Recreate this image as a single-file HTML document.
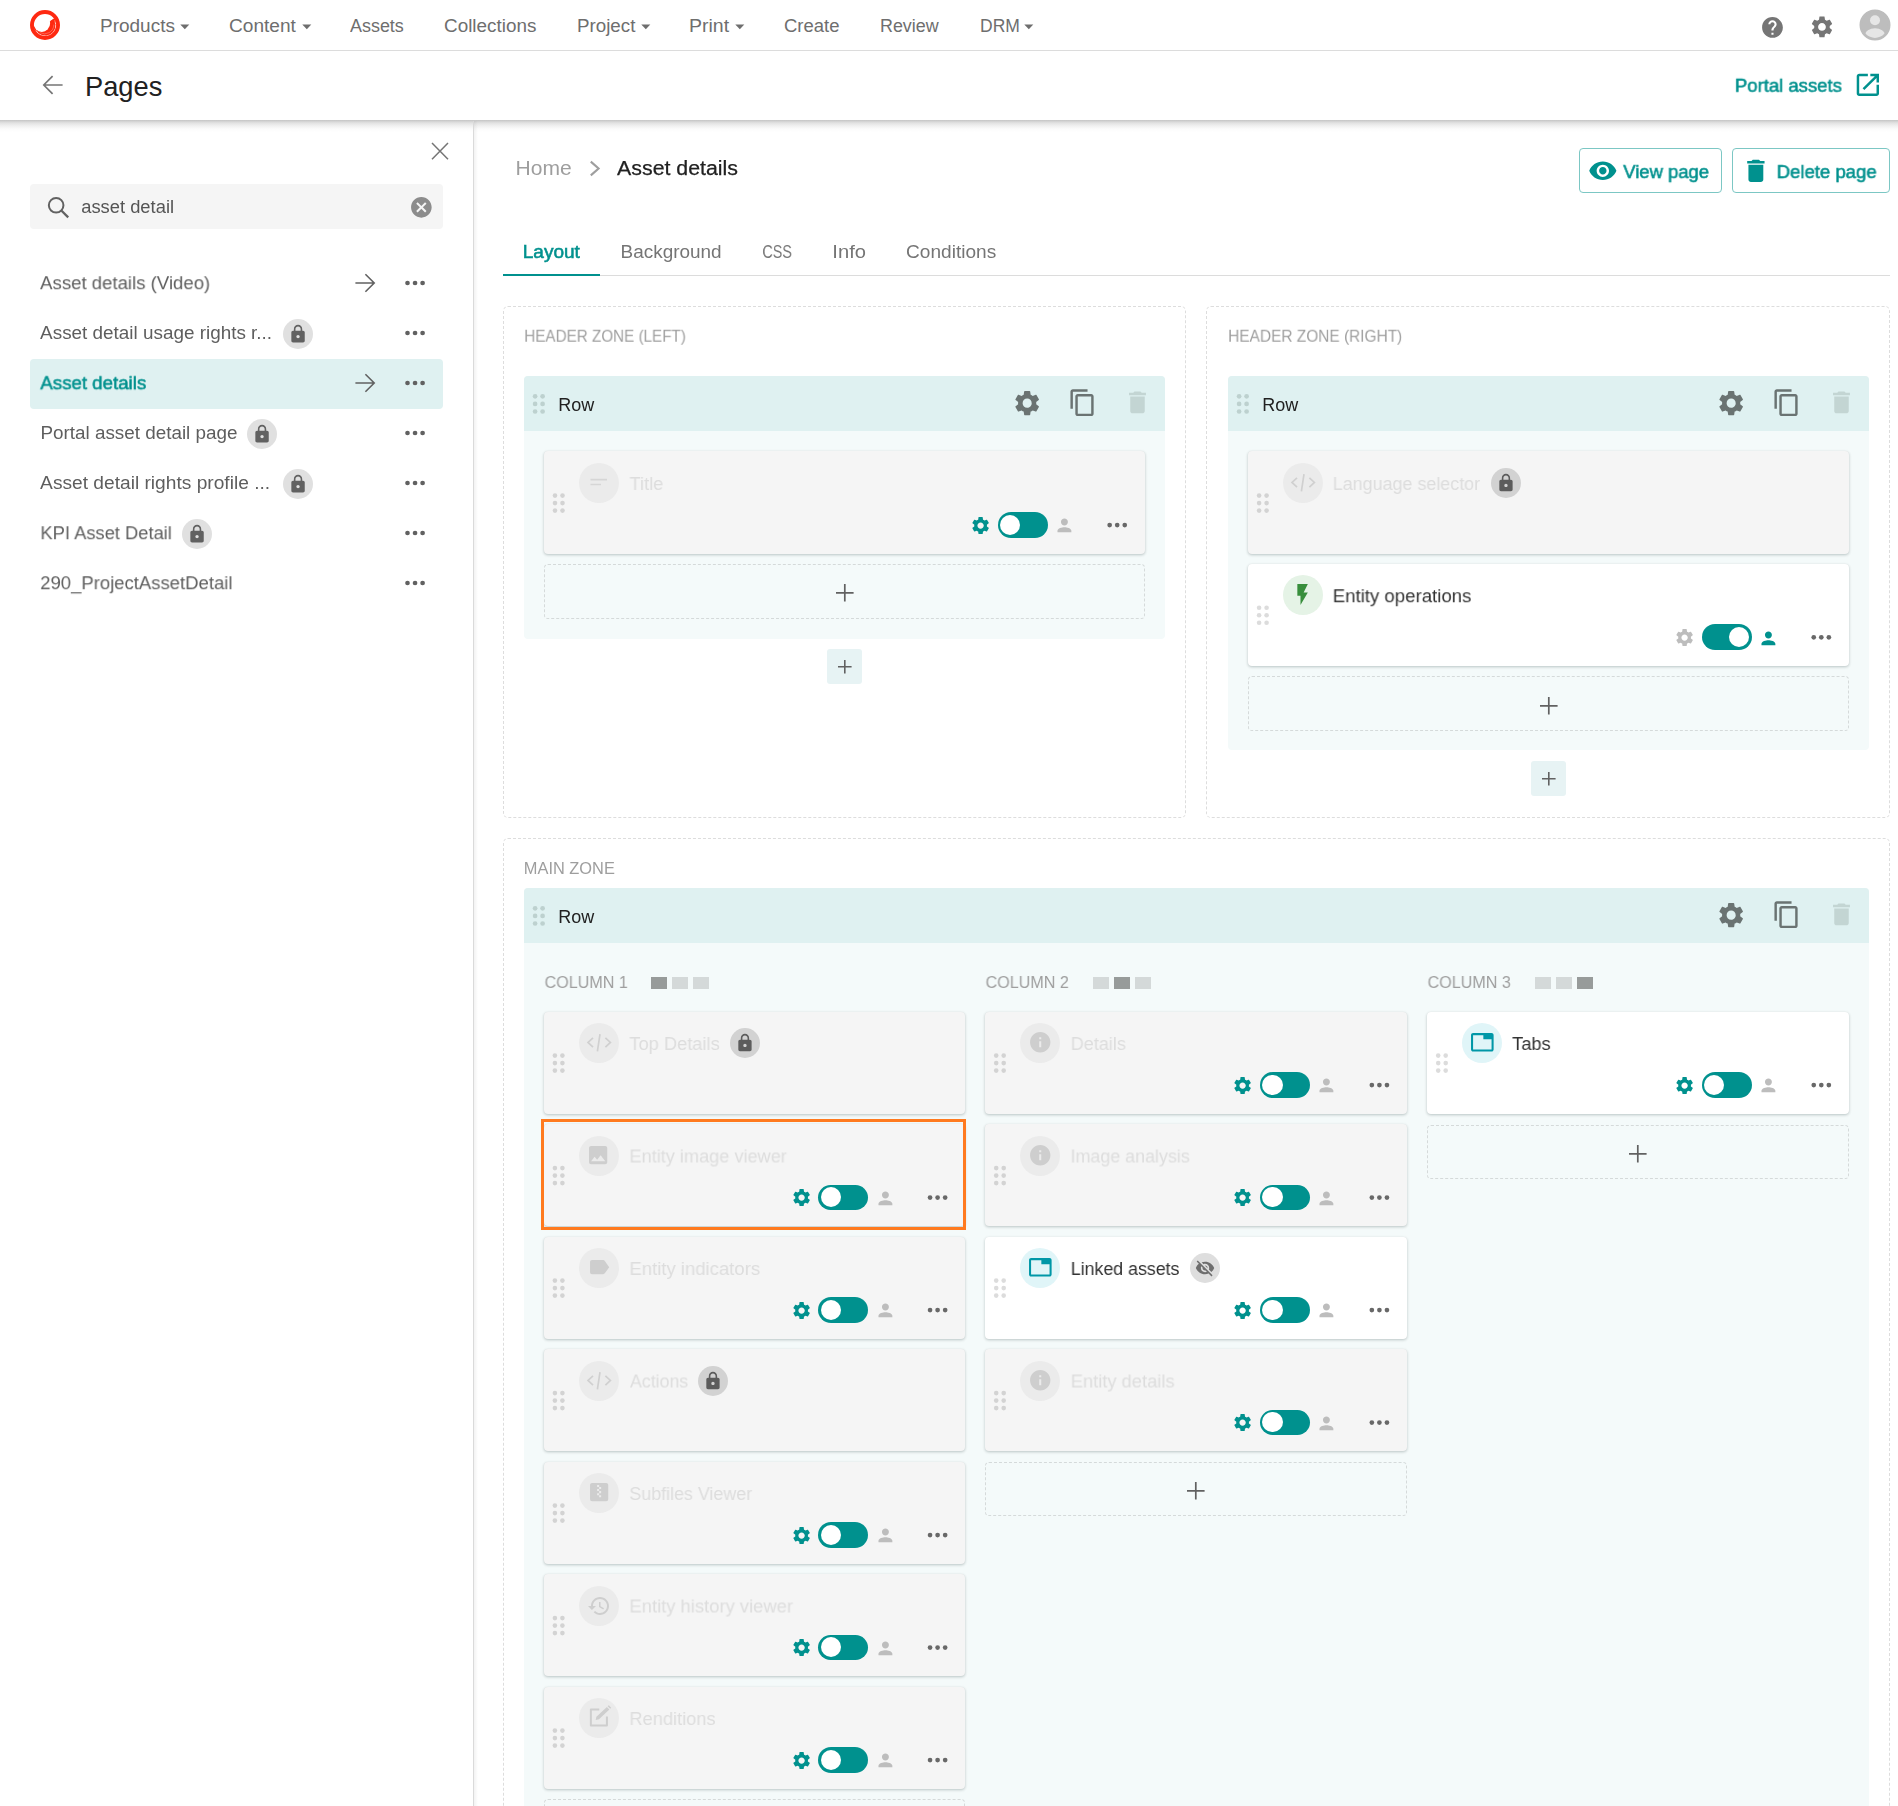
<!DOCTYPE html>
<html lang="en"><head><meta charset="utf-8"><title>Pages - Asset details</title>
<style>
html{margin:0;padding:0;background:#fff;overflow:hidden;width:1898px;height:1806px}
body{margin:0;padding:0;background:#fff}
body{width:1898px;height:1806px;position:relative;overflow:hidden;font-family:"Liberation Sans", sans-serif}
#r{position:absolute;left:0;top:0;width:1898px;height:1806px;overflow:hidden}
#r>div,#r>svg,#r>span{position:absolute;box-sizing:border-box}
.t{white-space:nowrap;line-height:24px;transform-origin:0 0;display:block}
.g{will-change:transform}
svg{display:block;overflow:visible}
.card{border-radius:4px;box-shadow:0 1px 3px rgba(0,30,30,.24),0 0 1px rgba(0,0,0,.06)}
.add{border:1px dashed #d5dada;border-radius:4px}
.zone{border:1px dashed #dddddd;border-radius:5px}
</style></head>
<body>
<div id="r">
<div style="left:0px;top:50px;width:1898px;height:1px;background:#dcdcdc"></div>
<svg style="left:29px;top:9px" width="32" height="32" viewBox="29 9 32 32">
<defs><clipPath id="lc"><circle cx="45" cy="25" r="11.6"/></clipPath></defs>
<g clip-path="url(#lc)">
<circle cx="45" cy="25" r="11.6" fill="#fe2911"/>
<ellipse cx="41.8" cy="22.9" rx="8.35" ry="9.1" fill="#fff"/>
<path d="M45 25 L58 15.6 L46 6 L30 10 Z" fill="#fff"/>
<path d="M35.8 30.3 A 10.6 10.6 0 0 0 54.7 20.6" stroke="#fff" stroke-opacity=".9" stroke-width=".9" fill="none"/>
<path d="M40 32.6 A 9.2 9.2 0 0 0 53.8 24.6" stroke="#fff" stroke-opacity=".45" stroke-width=".6" fill="none"/>
</g>
<path d="M50 21.3 L53.5 19 L55 22.6 Z" fill="#fe2911"/>
<circle cx="45" cy="25" r="13.05" stroke="#fe2911" stroke-width="3.9" fill="none"/>
</svg>
<span class="t" style="left:99.97px;top:14px;font-size:17.5px;color:#6e6e6e;transform:scaleX(1.0851)">Products</span>
<svg style="left:180.1px;top:24px" width="10" height="6" viewBox="0 0 10 6"><path d="M0.3 0.4H9.3L4.8 5.2Z" fill="#6e6e6e"/></svg>
<span class="t" style="left:228.81px;top:14px;font-size:17.5px;color:#6e6e6e;transform:scaleX(1.0905)">Content</span>
<svg style="left:301.5px;top:24px" width="10" height="6" viewBox="0 0 10 6"><path d="M0.3 0.4H9.3L4.8 5.2Z" fill="#6e6e6e"/></svg>
<span class="t" style="left:349.50px;top:14px;font-size:17.5px;color:#6e6e6e;transform:scaleX(1.0242)">Assets</span>
<span class="t" style="left:443.82px;top:14px;font-size:17.5px;color:#6e6e6e;transform:scaleX(1.0786)">Collections</span>
<span class="t" style="left:576.89px;top:14px;font-size:17.5px;color:#6e6e6e;transform:scaleX(1.0711)">Project</span>
<svg style="left:641.4px;top:24px" width="10" height="6" viewBox="0 0 10 6"><path d="M0.3 0.4H9.3L4.8 5.2Z" fill="#6e6e6e"/></svg>
<span class="t" style="left:689.48px;top:14px;font-size:17.5px;color:#6e6e6e;transform:scaleX(1.1139)">Print</span>
<svg style="left:735.2px;top:24px" width="10" height="6" viewBox="0 0 10 6"><path d="M0.3 0.4H9.3L4.8 5.2Z" fill="#6e6e6e"/></svg>
<span class="t" style="left:783.64px;top:14px;font-size:17.5px;color:#6e6e6e;transform:scaleX(1.0562)">Create</span>
<span class="t" style="left:880.22px;top:14px;font-size:17.5px;color:#6e6e6e;transform:scaleX(1.0223)">Review</span>
<span class="t" style="left:980.10px;top:14px;font-size:17.5px;color:#6e6e6e;transform:scaleX(1.0000)">DRM</span>
<svg style="left:1024.2px;top:24px" width="10" height="6" viewBox="0 0 10 6"><path d="M0.3 0.4H9.3L4.8 5.2Z" fill="#6e6e6e"/></svg>
<svg style="left:1760.12px;top:14.72px" width="24.96" height="24.96" viewBox="0 0 24 24"><path fill="#757575" d="M12 2C6.48 2 2 6.48 2 12s4.48 10 10 10 10-4.48 10-10S17.52 2 12 2zm1 17h-2v-2h2v2zm2.07-7.75l-.9.92C13.45 12.9 13 13.5 13 15h-2v-.5c0-1.1.45-2.1 1.17-2.83l1.24-1.26c.37-.36.59-.86.59-1.41 0-1.1-.9-2-2-2s-2 .9-2 2H8c0-2.21 1.79-4 4-4s4 1.79 4 4c0 .88-.36 1.68-.93 2.25z"/></svg>
<svg style="left:1809.42px;top:14.32px" width="25.96" height="25.96" viewBox="0 0 24 24"><path fill="#757575" d="M19.14 12.94c.04-.3.06-.61.06-.94 0-.32-.02-.64-.07-.94l2.03-1.58c.18-.14.23-.41.12-.61l-1.92-3.32c-.12-.22-.37-.29-.59-.22l-2.39.96c-.5-.38-1.03-.7-1.62-.94l-.36-2.54c-.04-.24-.24-.41-.48-.41h-3.84c-.24 0-.43.17-.47.41l-.36 2.54c-.59.24-1.13.57-1.62.94l-2.39-.96c-.22-.08-.47 0-.59.22L2.74 8.87c-.12.21-.08.47.12.61l2.03 1.58c-.05.3-.09.63-.09.94s.02.64.07.94l-2.03 1.58c-.18.14-.23.41-.12.61l1.92 3.32c.12.22.37.29.59.22l2.39-.96c.5.38 1.03.7 1.62.94l.36 2.54c.05.24.24.41.48.41h3.84c.24 0 .44-.17.47-.41l.36-2.54c.59-.24 1.13-.56 1.62-.94l2.39.96c.22.08.47 0 .59-.22l1.92-3.32c.12-.22.07-.47-.12-.61l-2.01-1.58zM12 15.6c-1.98 0-3.6-1.62-3.6-3.6s1.62-3.6 3.6-3.6 3.6 1.62 3.6 3.6-1.62 3.6-3.6 3.6z"/></svg>
<svg style="left:1860px;top:10px" width="30" height="30" viewBox="0 0 30 30">
<defs><clipPath id="av"><circle cx="15" cy="15" r="15"/></clipPath></defs>
<circle cx="15" cy="15" r="15" fill="#bdbdbd"/>
<g clip-path="url(#av)" fill="#e6e6e6"><circle cx="15" cy="10.3" r="5"/><ellipse cx="15" cy="24.6" rx="10" ry="6.3"/></g>
<circle cx="15" cy="15" r="14.2" fill="none" stroke="#bdbdbd" stroke-width="2.6"/>
</svg>
<div style="left:0px;top:120px;width:1898px;height:12px;background:linear-gradient(#c4c4c4 0,#cfcfcf 8%,#e2e2e2 25%,#f1f1f1 50%,#fbfbfb 75%,#fff 100%)"></div>
<svg style="left:42px;top:74px" width="22" height="22" viewBox="0 0 22 22"><path d="M20.6 11H2M10.6 2.2L1.8 11l8.8 8.8" stroke="#757575" stroke-width="1.7" fill="none"/></svg>
<span class="t" style="left:85.41px;top:75px;font-size:28px;color:#212121;transform:scaleX(0.9737)">Pages</span>
<span class="t g" style="left:1734px;top:73px;font-size:18.75px;color:#00918e;transform:translate(0.87px,0.80px) scaleX(0.9874);-webkit-text-stroke:0.55px #00918e">Portal assets</span>
<svg style="left:1852.63px;top:70.03px" width="29.73" height="29.73" viewBox="0 0 24 24"><path fill="#00918e" d="M19 19H5V5h7V3H5c-1.11 0-2 .9-2 2v14c0 1.1.89 2 2 2h14c1.1 0 2-.9 2-2v-7h-2v7zM14 3v2h3.59l-9.83 9.83 1.41 1.41L19 6.41V10h2V3h-7z"/></svg>
<div style="left:473px;top:121px;width:1px;height:1690px;background:#dadada"></div>
<div style="left:474px;top:121px;width:4px;height:1690px;background:linear-gradient(90deg,rgba(0,0,0,.05),rgba(0,0,0,0))"></div>
<svg style="left:431px;top:141.5px" width="18" height="18" viewBox="0 0 18 18"><path d="M1 1L17 17.3M17 1L1 17.3" stroke="#757575" stroke-width="1.5" fill="none"/></svg>
<div style="left:30px;top:184px;width:413px;height:44.5px;background:#f5f5f5;border-radius:4px"></div>
<svg style="left:46px;top:196px" width="24" height="24" viewBox="0 0 24 24"><circle cx="10.15" cy="9.3" r="7.3" stroke="#616161" stroke-width="2" fill="none"/><path d="M15.6 14.8L22.2 21.4" stroke="#616161" stroke-width="2.3"/></svg>
<span class="t g" style="left:81px;top:195px;font-size:17.5px;color:#555;transform:translate(0.21px,0.00px) scaleX(1.0486)">asset detail</span>
<svg style="left:408.94px;top:195.24px" width="24.72" height="24.72" viewBox="0 0 24 24"><path fill="#8c8c8c" d="M12 2C6.47 2 2 6.47 2 12s4.47 10 10 10 10-4.47 10-10S17.53 2 12 2zm5 13.59L15.59 17 12 13.41 8.41 17 7 15.59 10.59 12 7 8.41 8.41 7 12 10.59 15.59 7 17 8.41 13.41 12 17 15.59z"/></svg>
<div style="left:30px;top:358.8px;width:413px;height:50px;background:#dff1f1;border-radius:4px"></div>
<span class="t g" style="left:40px;top:271px;font-size:18.75px;color:#5e5e5e;transform:translate(0.10px,0.20px) scaleX(0.9912)">Asset details (Video)</span>
<svg style="left:354px;top:272px" width="22" height="22" viewBox="0 0 22 22"><path d="M1.4 11H20M11.4 2.2l8.8 8.8-8.8 8.8" stroke="#616161" stroke-width="1.6" fill="none"/></svg>
<svg style="left:402px;top:278px" width="26" height="10" fill="#616161"><circle cx="5.50" cy="5.00" r="2.35"/><circle cx="13.05" cy="5.00" r="2.35"/><circle cx="20.60" cy="5.00" r="2.35"/></svg>
<span class="t g" style="left:40px;top:321px;font-size:18.75px;color:#5e5e5e;transform:translate(0.10px,0.20px) scaleX(1.0072)">Asset detail usage rights r...</span>
<svg style="left:402px;top:328px" width="26" height="10" fill="#616161"><circle cx="5.50" cy="5.00" r="2.35"/><circle cx="13.05" cy="5.00" r="2.35"/><circle cx="20.60" cy="5.00" r="2.35"/></svg>
<div style="left:282.8px;top:318.7px;width:30px;height:30px;background:#e0e0e0;border-radius:50%"></div>
<svg style="left:287.75px;top:323.57px" width="20.10" height="20.10" viewBox="0 0 24 24"><path fill="#616161" d="M18 8h-1V6c0-2.76-2.24-5-5-5S7 3.24 7 6v2H6c-1.1 0-2 .9-2 2v10c0 1.1.9 2 2 2h12c1.1 0 2-.9 2-2V10c0-1.1-.9-2-2-2zm-6 9c-1.1 0-2-.9-2-2s.9-2 2-2 2 .9 2 2-.9 2-2 2zm3.1-9H8.9V6c0-1.71 1.39-3.1 3.1-3.1 1.71 0 3.1 1.39 3.1 3.1v2z"/></svg>
<span class="t g" style="left:40px;top:371px;font-size:18.75px;color:#00918e;transform:translate(0.35px,0.20px) scaleX(0.9958);-webkit-text-stroke:0.55px #00918e">Asset details</span>
<svg style="left:354px;top:372px" width="22" height="22" viewBox="0 0 22 22"><path d="M1.4 11H20M11.4 2.2l8.8 8.8-8.8 8.8" stroke="#616161" stroke-width="1.6" fill="none"/></svg>
<svg style="left:402px;top:378px" width="26" height="10" fill="#616161"><circle cx="5.50" cy="5.00" r="2.35"/><circle cx="13.05" cy="5.00" r="2.35"/><circle cx="20.60" cy="5.00" r="2.35"/></svg>
<span class="t g" style="left:40px;top:421px;font-size:18.75px;color:#5e5e5e;transform:translate(0.39px,0.20px) scaleX(1.0059)">Portal asset detail page</span>
<svg style="left:402px;top:428px" width="26" height="10" fill="#616161"><circle cx="5.50" cy="5.00" r="2.35"/><circle cx="13.05" cy="5.00" r="2.35"/><circle cx="20.60" cy="5.00" r="2.35"/></svg>
<div style="left:247px;top:418.7px;width:30px;height:30px;background:#e0e0e0;border-radius:50%"></div>
<svg style="left:251.95px;top:423.57px" width="20.10" height="20.10" viewBox="0 0 24 24"><path fill="#616161" d="M18 8h-1V6c0-2.76-2.24-5-5-5S7 3.24 7 6v2H6c-1.1 0-2 .9-2 2v10c0 1.1.9 2 2 2h12c1.1 0 2-.9 2-2V10c0-1.1-.9-2-2-2zm-6 9c-1.1 0-2-.9-2-2s.9-2 2-2 2 .9 2 2-.9 2-2 2zm3.1-9H8.9V6c0-1.71 1.39-3.1 3.1-3.1 1.71 0 3.1 1.39 3.1 3.1v2z"/></svg>
<span class="t g" style="left:40px;top:471px;font-size:18.75px;color:#5e5e5e;transform:translate(0.10px,0.20px) scaleX(1.0219)">Asset detail rights profile ...</span>
<svg style="left:402px;top:478px" width="26" height="10" fill="#616161"><circle cx="5.50" cy="5.00" r="2.35"/><circle cx="13.05" cy="5.00" r="2.35"/><circle cx="20.60" cy="5.00" r="2.35"/></svg>
<div style="left:282.85px;top:468.7px;width:30px;height:30px;background:#e0e0e0;border-radius:50%"></div>
<svg style="left:287.80px;top:473.57px" width="20.10" height="20.10" viewBox="0 0 24 24"><path fill="#616161" d="M18 8h-1V6c0-2.76-2.24-5-5-5S7 3.24 7 6v2H6c-1.1 0-2 .9-2 2v10c0 1.1.9 2 2 2h12c1.1 0 2-.9 2-2V10c0-1.1-.9-2-2-2zm-6 9c-1.1 0-2-.9-2-2s.9-2 2-2 2 .9 2 2-.9 2-2 2zm3.1-9H8.9V6c0-1.71 1.39-3.1 3.1-3.1 1.71 0 3.1 1.39 3.1 3.1v2z"/></svg>
<span class="t g" style="left:40px;top:521px;font-size:18.75px;color:#5e5e5e;transform:translate(0.43px,0.20px) scaleX(0.9776)">KPI Asset Detail</span>
<svg style="left:402px;top:528px" width="26" height="10" fill="#616161"><circle cx="5.50" cy="5.00" r="2.35"/><circle cx="13.05" cy="5.00" r="2.35"/><circle cx="20.60" cy="5.00" r="2.35"/></svg>
<div style="left:181.85px;top:518.7px;width:30px;height:30px;background:#e0e0e0;border-radius:50%"></div>
<svg style="left:186.80px;top:523.57px" width="20.10" height="20.10" viewBox="0 0 24 24"><path fill="#616161" d="M18 8h-1V6c0-2.76-2.24-5-5-5S7 3.24 7 6v2H6c-1.1 0-2 .9-2 2v10c0 1.1.9 2 2 2h12c1.1 0 2-.9 2-2V10c0-1.1-.9-2-2-2zm-6 9c-1.1 0-2-.9-2-2s.9-2 2-2 2 .9 2 2-.9 2-2 2zm3.1-9H8.9V6c0-1.71 1.39-3.1 3.1-3.1 1.71 0 3.1 1.39 3.1 3.1v2z"/></svg>
<span class="t g" style="left:40px;top:571px;font-size:18.75px;color:#5e5e5e;transform:translate(0.21px,0.20px) scaleX(0.9863)">290_ProjectAssetDetail</span>
<svg style="left:402px;top:578px" width="26" height="10" fill="#616161"><circle cx="5.50" cy="5.00" r="2.35"/><circle cx="13.05" cy="5.00" r="2.35"/><circle cx="20.60" cy="5.00" r="2.35"/></svg>
<span class="t g" style="left:515px;top:156px;font-size:20px;color:#9e9e9e;transform:translate(0.46px,0.00px) scaleX(1.0532)">Home</span>
<svg style="left:589px;top:159.5px" width="12" height="17" viewBox="0 0 12 17"><path d="M1.8 1.6L9.6 8.5L1.8 15.4" stroke="#9e9e9e" stroke-width="2.1" fill="none"/></svg>
<span class="t g" style="left:617px;top:156px;font-size:20px;color:#212121;transform:translate(0.10px,0.00px) scaleX(1.0661);-webkit-text-stroke:0.25px #212121">Asset details</span>
<div style="left:1579px;top:148px;width:143px;height:45px;border:1px solid #7cc7c4;border-radius:4px;background:#fff"></div>
<svg style="left:1588.36px;top:156.36px" width="29.67" height="29.67" viewBox="0 0 24 24"><path fill="#00918e" d="M12 4.5C7 4.5 2.73 7.61 1 12c1.73 4.39 6 7.5 11 7.5s9.27-3.11 11-7.5c-1.73-4.39-6-7.5-11-7.5zM12 17c-2.76 0-5-2.24-5-5s2.24-5 5-5 5 2.24 5 5-2.24 5-5 5zm0-8c-1.66 0-3 1.34-3 3s1.34 3 3 3 3-1.34 3-3-1.34-3-3-3z"/></svg>
<span class="t g" style="left:1623px;top:160px;font-size:18.75px;color:#00918e;transform:translate(0.25px,0.10px) scaleX(0.9839);-webkit-text-stroke:0.55px #00918e">View page</span>
<div style="left:1732px;top:148px;width:158px;height:45px;border:1px solid #7cc7c4;border-radius:4px;background:#fff"></div>
<svg style="left:1741.43px;top:156.23px" width="29.74" height="29.74" viewBox="0 0 24 24"><path fill="#00918e" d="M6 19c0 1.1.9 2 2 2h8c1.1 0 2-.9 2-2V7H6v12zM19 4h-3.5l-1-1h-5l-1 1H5v2h14V4z"/></svg>
<span class="t g" style="left:1776px;top:160px;font-size:18.75px;color:#00918e;transform:translate(0.66px,0.10px) scaleX(0.9884);-webkit-text-stroke:0.55px #00918e">Delete page</span>
<div style="left:503px;top:275px;width:1387px;height:1px;background:#dcdcdc"></div>
<div style="left:503px;top:273.7px;width:97px;height:2.6px;background:#00918e"></div>
<span class="t g" style="left:522px;top:240px;font-size:18.75px;color:#00918e;transform:translate(0.73px,0.00px) scaleX(1.0154);-webkit-text-stroke:0.55px #00918e">Layout</span>
<span class="t g" style="left:620px;top:240px;font-size:18.75px;color:#757575;transform:translate(0.59px,0.00px) scaleX(1.0093)">Background</span>
<span class="t g" style="left:762px;top:240px;font-size:18.75px;color:#757575;transform:translate(0.38px,0.00px) scaleX(0.7660)">CSS</span>
<span class="t g" style="left:832px;top:240px;font-size:18.75px;color:#757575;transform:translate(0.32px,0.00px) scaleX(1.0748)">Info</span>
<span class="t g" style="left:906px;top:240px;font-size:18.75px;color:#757575;transform:translate(0.08px,0.00px) scaleX(1.0172)">Conditions</span>
<div class="zone" style="left:503px;top:306px;width:683px;height:512px"></div>
<div class="zone" style="left:1206px;top:306px;width:684px;height:512px"></div>
<div class="zone" style="left:503px;top:838px;width:1387px;height:1000px"></div>
<span class="t g" style="left:524px;top:323px;font-size:16.25px;color:#9e9e9e;transform:translate(0.23px,0.70px) scaleX(0.9374)">HEADER ZONE (LEFT)</span>
<span class="t g" style="left:1228px;top:323px;font-size:16.25px;color:#9e9e9e;transform:translate(0.11px,0.70px) scaleX(0.9503)">HEADER ZONE (RIGHT)</span>
<span class="t g" style="left:523px;top:855px;font-size:16.25px;color:#9e9e9e;transform:translate(0.84px,0.70px) scaleX(1.0085)">MAIN ZONE</span>
<div style="left:524px;top:376px;width:641px;height:262.5px;background:#f4fafa;border-radius:4px"></div>
<div style="left:524px;top:376px;width:641px;height:55px;background:#dff1f1;border-radius:4px 4px 0 0"></div>
<svg style="left:530px;top:391px" width="18" height="26" fill="#bdd1cf"><circle cx="5.10" cy="5.30" r="2.35"/><circle cx="12.60" cy="5.30" r="2.35"/><circle cx="5.10" cy="12.90" r="2.35"/><circle cx="12.60" cy="12.90" r="2.35"/><circle cx="5.10" cy="20.50" r="2.35"/><circle cx="12.60" cy="20.50" r="2.35"/></svg>
<span class="t g" style="left:558px;top:392px;font-size:17.5px;color:#212121;transform:translate(0.36px,0.80px) scaleX(1.0269)">Row</span>
<svg style="left:1012.24px;top:387.84px" width="30.33" height="30.33" viewBox="0 0 24 24"><path fill="#6a7372" d="M19.14 12.94c.04-.3.06-.61.06-.94 0-.32-.02-.64-.07-.94l2.03-1.58c.18-.14.23-.41.12-.61l-1.92-3.32c-.12-.22-.37-.29-.59-.22l-2.39.96c-.5-.38-1.03-.7-1.62-.94l-.36-2.54c-.04-.24-.24-.41-.48-.41h-3.84c-.24 0-.43.17-.47.41l-.36 2.54c-.59.24-1.13.57-1.62.94l-2.39-.96c-.22-.08-.47 0-.59.22L2.74 8.87c-.12.21-.08.47.12.61l2.03 1.58c-.05.3-.09.63-.09.94s.02.64.07.94l-2.03 1.58c-.18.14-.23.41-.12.61l1.92 3.32c.12.22.37.29.59.22l2.39-.96c.5.38 1.03.7 1.62.94l.36 2.54c.05.24.24.41.48.41h3.84c.24 0 .44-.17.47-.41l.36-2.54c.59-.24 1.13-.56 1.62-.94l2.39.96c.22.08.47 0 .59-.22l1.92-3.32c.12-.22.07-.47-.12-.61l-2.01-1.58zM12 15.6c-1.98 0-3.6-1.62-3.6-3.6s1.62-3.6 3.6-3.6 3.6 1.62 3.6 3.6-1.62 3.6-3.6 3.6z"/></svg>
<svg style="left:1067.66px;top:388.15px" width="29.31" height="29.31" viewBox="0 0 24 24"><path fill="#6a7372" d="M16 1H4c-1.1 0-2 .9-2 2v14h2V3h12V1zm3 4H8c-1.1 0-2 .9-2 2v14c0 1.1.9 2 2 2h11c1.1 0 2-.9 2-2V7c0-1.1-.9-2-2-2zm0 16H8V7h11v14z"/></svg>
<svg style="left:1122.81px;top:388.31px" width="28.97" height="28.97" viewBox="0 0 24 24"><path fill="#c3d5d3" d="M6 19c0 1.1.9 2 2 2h8c1.1 0 2-.9 2-2V7H6v12zM19 4h-3.5l-1-1h-5l-1 1H5v2h14V4z"/></svg>
<div style="left:1228px;top:376px;width:641px;height:374.29999999999995px;background:#f4fafa;border-radius:4px"></div>
<div style="left:1228px;top:376px;width:641px;height:55px;background:#dff1f1;border-radius:4px 4px 0 0"></div>
<svg style="left:1234px;top:391px" width="18" height="26" fill="#bdd1cf"><circle cx="5.10" cy="5.30" r="2.35"/><circle cx="12.60" cy="5.30" r="2.35"/><circle cx="5.10" cy="12.90" r="2.35"/><circle cx="12.60" cy="12.90" r="2.35"/><circle cx="5.10" cy="20.50" r="2.35"/><circle cx="12.60" cy="20.50" r="2.35"/></svg>
<span class="t g" style="left:1262px;top:392px;font-size:17.5px;color:#212121;transform:translate(0.36px,0.80px) scaleX(1.0269)">Row</span>
<svg style="left:1716.24px;top:387.84px" width="30.33" height="30.33" viewBox="0 0 24 24"><path fill="#6a7372" d="M19.14 12.94c.04-.3.06-.61.06-.94 0-.32-.02-.64-.07-.94l2.03-1.58c.18-.14.23-.41.12-.61l-1.92-3.32c-.12-.22-.37-.29-.59-.22l-2.39.96c-.5-.38-1.03-.7-1.62-.94l-.36-2.54c-.04-.24-.24-.41-.48-.41h-3.84c-.24 0-.43.17-.47.41l-.36 2.54c-.59.24-1.13.57-1.62.94l-2.39-.96c-.22-.08-.47 0-.59.22L2.74 8.87c-.12.21-.08.47.12.61l2.03 1.58c-.05.3-.09.63-.09.94s.02.64.07.94l-2.03 1.58c-.18.14-.23.41-.12.61l1.92 3.32c.12.22.37.29.59.22l2.39-.96c.5.38 1.03.7 1.62.94l.36 2.54c.05.24.24.41.48.41h3.84c.24 0 .44-.17.47-.41l.36-2.54c.59-.24 1.13-.56 1.62-.94l2.39.96c.22.08.47 0 .59-.22l1.92-3.32c.12-.22.07-.47-.12-.61l-2.01-1.58zM12 15.6c-1.98 0-3.6-1.62-3.6-3.6s1.62-3.6 3.6-3.6 3.6 1.62 3.6 3.6-1.62 3.6-3.6 3.6z"/></svg>
<svg style="left:1771.66px;top:388.15px" width="29.31" height="29.31" viewBox="0 0 24 24"><path fill="#6a7372" d="M16 1H4c-1.1 0-2 .9-2 2v14h2V3h12V1zm3 4H8c-1.1 0-2 .9-2 2v14c0 1.1.9 2 2 2h11c1.1 0 2-.9 2-2V7c0-1.1-.9-2-2-2zm0 16H8V7h11v14z"/></svg>
<svg style="left:1826.81px;top:388.31px" width="28.97" height="28.97" viewBox="0 0 24 24"><path fill="#c3d5d3" d="M6 19c0 1.1.9 2 2 2h8c1.1 0 2-.9 2-2V7H6v12zM19 4h-3.5l-1-1h-5l-1 1H5v2h14V4z"/></svg>
<div style="left:524px;top:888px;width:1345px;height:942px;background:#f4fafa;border-radius:4px"></div>
<div style="left:524px;top:888px;width:1345px;height:55px;background:#dff1f1;border-radius:4px 4px 0 0"></div>
<svg style="left:530px;top:903px" width="18" height="26" fill="#bdd1cf"><circle cx="5.10" cy="5.30" r="2.35"/><circle cx="12.60" cy="5.30" r="2.35"/><circle cx="5.10" cy="12.90" r="2.35"/><circle cx="12.60" cy="12.90" r="2.35"/><circle cx="5.10" cy="20.50" r="2.35"/><circle cx="12.60" cy="20.50" r="2.35"/></svg>
<span class="t g" style="left:558px;top:904px;font-size:17.5px;color:#212121;transform:translate(0.36px,0.80px) scaleX(1.0269)">Row</span>
<svg style="left:1716.24px;top:899.84px" width="30.33" height="30.33" viewBox="0 0 24 24"><path fill="#6a7372" d="M19.14 12.94c.04-.3.06-.61.06-.94 0-.32-.02-.64-.07-.94l2.03-1.58c.18-.14.23-.41.12-.61l-1.92-3.32c-.12-.22-.37-.29-.59-.22l-2.39.96c-.5-.38-1.03-.7-1.62-.94l-.36-2.54c-.04-.24-.24-.41-.48-.41h-3.84c-.24 0-.43.17-.47.41l-.36 2.54c-.59.24-1.13.57-1.62.94l-2.39-.96c-.22-.08-.47 0-.59.22L2.74 8.87c-.12.21-.08.47.12.61l2.03 1.58c-.05.3-.09.63-.09.94s.02.64.07.94l-2.03 1.58c-.18.14-.23.41-.12.61l1.92 3.32c.12.22.37.29.59.22l2.39-.96c.5.38 1.03.7 1.62.94l.36 2.54c.05.24.24.41.48.41h3.84c.24 0 .44-.17.47-.41l.36-2.54c.59-.24 1.13-.56 1.62-.94l2.39.96c.22.08.47 0 .59-.22l1.92-3.32c.12-.22.07-.47-.12-.61l-2.01-1.58zM12 15.6c-1.98 0-3.6-1.62-3.6-3.6s1.62-3.6 3.6-3.6 3.6 1.62 3.6 3.6-1.62 3.6-3.6 3.6z"/></svg>
<svg style="left:1771.66px;top:900.15px" width="29.31" height="29.31" viewBox="0 0 24 24"><path fill="#6a7372" d="M16 1H4c-1.1 0-2 .9-2 2v14h2V3h12V1zm3 4H8c-1.1 0-2 .9-2 2v14c0 1.1.9 2 2 2h11c1.1 0 2-.9 2-2V7c0-1.1-.9-2-2-2zm0 16H8V7h11v14z"/></svg>
<svg style="left:1826.81px;top:900.31px" width="28.97" height="28.97" viewBox="0 0 24 24"><path fill="#c3d5d3" d="M6 19c0 1.1.9 2 2 2h8c1.1 0 2-.9 2-2V7H6v12zM19 4h-3.5l-1-1h-5l-1 1H5v2h14V4z"/></svg>
<div class="card" style="left:543.8px;top:450.6px;width:601.3px;height:103.4px;background:#f5f5f5"></div>
<svg style="left:550px;top:491px" width="18" height="25" fill="#d3d3d3"><circle cx="5.00" cy="4.60" r="2.30"/><circle cx="12.50" cy="4.60" r="2.30"/><circle cx="5.00" cy="12.10" r="2.30"/><circle cx="12.50" cy="12.10" r="2.30"/><circle cx="5.00" cy="19.60" r="2.30"/><circle cx="12.50" cy="19.60" r="2.30"/></svg>
<div style="left:578.8px;top:463.0px;width:40px;height:40px;background:#ebebeb;border-radius:50%"></div>
<svg style="left:588.8px;top:477.0px" width="20" height="12" viewBox="0 0 20 12"><path d="M1.5 2.6H18M1.5 7.5H12" stroke="#d6d6d6" stroke-width="1.7" fill="none"/></svg>
<span class="t g" style="left:629px;top:472px;font-size:18.75px;color:#dddddd;transform:translate(0.51px,0.00px) scaleX(0.9731)">Title</span>
<svg style="left:970.20px;top:514.90px" width="21.20" height="21.20" viewBox="0 0 24 24"><path fill="#00918e" d="M19.14 12.94c.04-.3.06-.61.06-.94 0-.32-.02-.64-.07-.94l2.03-1.58c.18-.14.23-.41.12-.61l-1.92-3.32c-.12-.22-.37-.29-.59-.22l-2.39.96c-.5-.38-1.03-.7-1.62-.94l-.36-2.54c-.04-.24-.24-.41-.48-.41h-3.84c-.24 0-.43.17-.47.41l-.36 2.54c-.59.24-1.13.57-1.62.94l-2.39-.96c-.22-.08-.47 0-.59.22L2.74 8.87c-.12.21-.08.47.12.61l2.03 1.58c-.05.3-.09.63-.09.94s.02.64.07.94l-2.03 1.58c-.18.14-.23.41-.12.61l1.92 3.32c.12.22.37.29.59.22l2.39-.96c.5.38 1.03.7 1.62.94l.36 2.54c.05.24.24.41.48.41h3.84c.24 0 .44-.17.47-.41l.36-2.54c.59-.24 1.13-.56 1.62-.94l2.39.96c.22.08.47 0 .59-.22l1.92-3.32c.12-.22.07-.47-.12-.61l-2.01-1.58zM12 15.6c-1.98 0-3.6-1.62-3.6-3.6s1.62-3.6 3.6-3.6 3.6 1.62 3.6 3.6-1.62 3.6-3.6 3.6z"/></svg>
<div style="left:997.6px;top:512.1px;width:50.3px;height:25.6px;background:#00918e;border-radius:13px"></div>
<div style="left:1000.2px;top:514.8px;width:20.2px;height:20.2px;background:#fff;border-radius:50%"></div>
<svg style="left:1054.27px;top:515.48px" width="20.85" height="20.85" viewBox="0 0 24 24"><path fill="#bdbdbd" d="M12 12c2.21 0 4-1.79 4-4s-1.79-4-4-4-4 1.79-4 4 1.79 4 4 4zm0 2c-2.67 0-8 1.34-8 4v2h16v-2c0-2.66-5.33-4-8-4z"/></svg>
<svg style="left:1104px;top:520px" width="26" height="10" fill="#686868"><circle cx="5.65" cy="5.10" r="2.35"/><circle cx="13.20" cy="5.10" r="2.35"/><circle cx="20.75" cy="5.10" r="2.35"/></svg>
<div class="add" style="left:543.9px;top:564.2px;width:601.2px;height:54.4px"></div>
<svg style="left:834.7px;top:583.4px" width="19.6" height="19.6" viewBox="0 0 19.6 19.6"><path d="M1 9.8H18.6M9.8 1V18.6" stroke="#616161" stroke-width="1.7" fill="none"/></svg>
<div style="left:827px;top:649px;width:35px;height:35px;background:#e7f3f4;border-radius:3px"></div>
<svg style="left:836.8px;top:658.9px" width="15.6" height="15.6" viewBox="0 0 15.6 15.6"><path d="M1 7.8H14.6M7.8 1V14.6" stroke="#616161" stroke-width="1.6" fill="none"/></svg>
<div class="card" style="left:1247.9px;top:450.6px;width:601.3px;height:103.4px;background:#f5f5f5"></div>
<svg style="left:1254px;top:491px" width="18" height="25" fill="#d3d3d3"><circle cx="5.10" cy="4.60" r="2.30"/><circle cx="12.60" cy="4.60" r="2.30"/><circle cx="5.10" cy="12.10" r="2.30"/><circle cx="12.60" cy="12.10" r="2.30"/><circle cx="5.10" cy="19.60" r="2.30"/><circle cx="12.60" cy="19.60" r="2.30"/></svg>
<div style="left:1282.9px;top:463.0px;width:40px;height:40px;background:#ebebeb;border-radius:50%"></div>
<svg style="left:1289.9px;top:473.0px" width="26" height="20" viewBox="0 0 26 20"><path d="M7 4.8L2 9.5l5 4.6M19.4 4.8l5 4.7-5 4.6M14 1.1L11.4 18.4" stroke="#d0d0d0" stroke-width="1.7" fill="none"/></svg>
<span class="t g" style="left:1332px;top:472px;font-size:18.75px;color:#dddddd;transform:translate(0.77px,0.00px) scaleX(0.9548)">Language selector</span>
<div style="left:1491px;top:468.0px;width:30px;height:30px;background:#d2d2d2;border-radius:50%"></div>
<svg style="left:1496.03px;top:473.14px" width="19.95" height="19.95" viewBox="0 0 24 24"><path fill="#5c5c5c" d="M18 8h-1V6c0-2.76-2.24-5-5-5S7 3.24 7 6v2H6c-1.1 0-2 .9-2 2v10c0 1.1.9 2 2 2h12c1.1 0 2-.9 2-2V10c0-1.1-.9-2-2-2zm-6 9c-1.1 0-2-.9-2-2s.9-2 2-2 2 .9 2 2-.9 2-2 2zm3.1-9H8.9V6c0-1.71 1.39-3.1 3.1-3.1 1.71 0 3.1 1.39 3.1 3.1v2z"/></svg>
<div class="card" style="left:1247.9px;top:564.0px;width:601.3px;height:102.2px;background:#fff"></div>
<svg style="left:1254px;top:603px" width="18" height="25" fill="#dcdcdc"><circle cx="5.10" cy="4.80" r="2.30"/><circle cx="12.60" cy="4.80" r="2.30"/><circle cx="5.10" cy="12.30" r="2.30"/><circle cx="12.60" cy="12.30" r="2.30"/><circle cx="5.10" cy="19.80" r="2.30"/><circle cx="12.60" cy="19.80" r="2.30"/></svg>
<div style="left:1282.9px;top:575.2px;width:40px;height:40px;background:#e5f3e6;border-radius:50%"></div>
<svg style="left:1289.80px;top:581.80px" width="25.20" height="25.20" viewBox="0 0 24 24"><path fill="#388e3c" d="M7 2v11h3v9l7-12h-4l4-8z"/></svg>
<span class="t g" style="left:1332px;top:584px;font-size:18.75px;color:#333;transform:translate(0.71px,0.20px) scaleX(0.9927)">Entity operations</span>
<svg style="left:1674.30px;top:627.10px" width="21.20" height="21.20" viewBox="0 0 24 24"><path fill="#bdbdbd" d="M19.14 12.94c.04-.3.06-.61.06-.94 0-.32-.02-.64-.07-.94l2.03-1.58c.18-.14.23-.41.12-.61l-1.92-3.32c-.12-.22-.37-.29-.59-.22l-2.39.96c-.5-.38-1.03-.7-1.62-.94l-.36-2.54c-.04-.24-.24-.41-.48-.41h-3.84c-.24 0-.43.17-.47.41l-.36 2.54c-.59.24-1.13.57-1.62.94l-2.39-.96c-.22-.08-.47 0-.59.22L2.74 8.87c-.12.21-.08.47.12.61l2.03 1.58c-.05.3-.09.63-.09.94s.02.64.07.94l-2.03 1.58c-.18.14-.23.41-.12.61l1.92 3.32c.12.22.37.29.59.22l2.39-.96c.5.38 1.03.7 1.62.94l.36 2.54c.05.24.24.41.48.41h3.84c.24 0 .44-.17.47-.41l.36-2.54c.59-.24 1.13-.56 1.62-.94l2.39.96c.22.08.47 0 .59-.22l1.92-3.32c.12-.22.07-.47-.12-.61l-2.01-1.58zM12 15.6c-1.98 0-3.6-1.62-3.6-3.6s1.62-3.6 3.6-3.6 3.6 1.62 3.6 3.6-1.62 3.6-3.6 3.6z"/></svg>
<div style="left:1701.7px;top:624.3px;width:50.3px;height:25.6px;background:#00918e;border-radius:13px"></div>
<div style="left:1729.2px;top:627.0px;width:20.2px;height:20.2px;background:#fff;border-radius:50%"></div>
<svg style="left:1758.38px;top:627.68px" width="20.85" height="20.85" viewBox="0 0 24 24"><path fill="#00918e" d="M12 12c2.21 0 4-1.79 4-4s-1.79-4-4-4-4 1.79-4 4 1.79 4 4 4zm0 2c-2.67 0-8 1.34-8 4v2h16v-2c0-2.66-5.33-4-8-4z"/></svg>
<svg style="left:1809px;top:632px" width="25" height="11" fill="#686868"><circle cx="4.75" cy="5.30" r="2.35"/><circle cx="12.30" cy="5.30" r="2.35"/><circle cx="19.85" cy="5.30" r="2.35"/></svg>
<div class="add" style="left:1247.9px;top:676.3px;width:601.3px;height:54.4px"></div>
<svg style="left:1538.75px;top:695.5px" width="19.6" height="19.6" viewBox="0 0 19.6 19.6"><path d="M1 9.8H18.6M9.8 1V18.6" stroke="#616161" stroke-width="1.7" fill="none"/></svg>
<div style="left:1531px;top:761px;width:35px;height:35px;background:#e7f3f4;border-radius:3px"></div>
<svg style="left:1540.8px;top:770.9px" width="15.6" height="15.6" viewBox="0 0 15.6 15.6"><path d="M1 7.8H14.6M7.8 1V14.6" stroke="#616161" stroke-width="1.6" fill="none"/></svg>
<span class="t g" style="left:544px;top:970px;font-size:16.25px;color:#9e9e9e;transform:translate(0.56px,0.00px) scaleX(0.9903)">COLUMN 1</span>
<div style="left:651.2px;top:977px;width:16px;height:12px;background:#979b9a"></div>
<div style="left:672.2px;top:977px;width:16px;height:12px;background:#d4d9d9"></div>
<div style="left:693.2px;top:977px;width:16px;height:12px;background:#d4d9d9"></div>
<span class="t g" style="left:985px;top:970px;font-size:16.25px;color:#9e9e9e;transform:translate(0.56px,0.00px) scaleX(0.9903)">COLUMN 2</span>
<div style="left:1093px;top:977px;width:16px;height:12px;background:#d4d9d9"></div>
<div style="left:1114px;top:977px;width:16px;height:12px;background:#979b9a"></div>
<div style="left:1135px;top:977px;width:16px;height:12px;background:#d4d9d9"></div>
<span class="t g" style="left:1427px;top:970px;font-size:16.25px;color:#9e9e9e;transform:translate(0.56px,0.00px) scaleX(0.9903)">COLUMN 3</span>
<div style="left:1535.1px;top:977px;width:16px;height:12px;background:#d4d9d9"></div>
<div style="left:1556.1px;top:977px;width:16px;height:12px;background:#d4d9d9"></div>
<div style="left:1577.1px;top:977px;width:16px;height:12px;background:#979b9a"></div>
<div class="card" style="left:543.7px;top:1011.8px;width:421.79999999999995px;height:102.2px;background:#f5f5f5"></div>
<svg style="left:550px;top:1051px" width="18" height="25" fill="#d3d3d3"><circle cx="4.90" cy="4.60" r="2.30"/><circle cx="12.40" cy="4.60" r="2.30"/><circle cx="4.90" cy="12.10" r="2.30"/><circle cx="12.40" cy="12.10" r="2.30"/><circle cx="4.90" cy="19.60" r="2.30"/><circle cx="12.40" cy="19.60" r="2.30"/></svg>
<div style="left:578.7px;top:1023.0px;width:40px;height:40px;background:#ebebeb;border-radius:50%"></div>
<svg style="left:585.7px;top:1033.0px" width="26" height="20" viewBox="0 0 26 20"><path d="M7 4.8L2 9.5l5 4.6M19.4 4.8l5 4.7-5 4.6M14 1.1L11.4 18.4" stroke="#d0d0d0" stroke-width="1.7" fill="none"/></svg>
<span class="t g" style="left:629px;top:1032px;font-size:18.75px;color:#dddddd;transform:translate(0.31px,0.00px) scaleX(0.9749)">Top Details</span>
<div style="left:730px;top:1028.0px;width:30px;height:30px;background:#d2d2d2;border-radius:50%"></div>
<svg style="left:735.02px;top:1033.14px" width="19.95" height="19.95" viewBox="0 0 24 24"><path fill="#5c5c5c" d="M18 8h-1V6c0-2.76-2.24-5-5-5S7 3.24 7 6v2H6c-1.1 0-2 .9-2 2v10c0 1.1.9 2 2 2h12c1.1 0 2-.9 2-2V10c0-1.1-.9-2-2-2zm-6 9c-1.1 0-2-.9-2-2s.9-2 2-2 2 .9 2 2-.9 2-2 2zm3.1-9H8.9V6c0-1.71 1.39-3.1 3.1-3.1 1.71 0 3.1 1.39 3.1 3.1v2z"/></svg>
<div class="card" style="left:543.7px;top:1124.3px;width:421.79999999999995px;height:102.2px;background:#f5f5f5"></div>
<svg style="left:550px;top:1163px" width="18" height="25" fill="#d3d3d3"><circle cx="4.90" cy="5.10" r="2.30"/><circle cx="12.40" cy="5.10" r="2.30"/><circle cx="4.90" cy="12.60" r="2.30"/><circle cx="12.40" cy="12.60" r="2.30"/><circle cx="4.90" cy="20.10" r="2.30"/><circle cx="12.40" cy="20.10" r="2.30"/></svg>
<div style="left:578.7px;top:1135.5px;width:40px;height:40px;background:#ebebeb;border-radius:50%"></div>
<svg style="left:586.47px;top:1142.97px" width="24.27" height="24.27" viewBox="0 0 24 24"><path fill="#cecece" d="M21 19V5c0-1.1-.9-2-2-2H5c-1.1 0-2 .9-2 2v14c0 1.1.9 2 2 2h14c1.1 0 2-.9 2-2zM8.5 13.5l2.5 3.01L14.5 12l4.5 6H5l3.5-4.5z"/></svg>
<span class="t g" style="left:629px;top:1144px;font-size:18.75px;color:#dddddd;transform:translate(0.45px,0.50px) scaleX(0.9680)">Entity image viewer</span>
<svg style="left:790.60px;top:1187.40px" width="21.20" height="21.20" viewBox="0 0 24 24"><path fill="#00918e" d="M19.14 12.94c.04-.3.06-.61.06-.94 0-.32-.02-.64-.07-.94l2.03-1.58c.18-.14.23-.41.12-.61l-1.92-3.32c-.12-.22-.37-.29-.59-.22l-2.39.96c-.5-.38-1.03-.7-1.62-.94l-.36-2.54c-.04-.24-.24-.41-.48-.41h-3.84c-.24 0-.43.17-.47.41l-.36 2.54c-.59.24-1.13.57-1.62.94l-2.39-.96c-.22-.08-.47 0-.59.22L2.74 8.87c-.12.21-.08.47.12.61l2.03 1.58c-.05.3-.09.63-.09.94s.02.64.07.94l-2.03 1.58c-.18.14-.23.41-.12.61l1.92 3.32c.12.22.37.29.59.22l2.39-.96c.5.38 1.03.7 1.62.94l.36 2.54c.05.24.24.41.48.41h3.84c.24 0 .44-.17.47-.41l.36-2.54c.59-.24 1.13-.56 1.62-.94l2.39.96c.22.08.47 0 .59-.22l1.92-3.32c.12-.22.07-.47-.12-.61l-2.01-1.58zM12 15.6c-1.98 0-3.6-1.62-3.6-3.6s1.62-3.6 3.6-3.6 3.6 1.62 3.6 3.6-1.62 3.6-3.6 3.6z"/></svg>
<div style="left:818.0px;top:1184.6px;width:50.3px;height:25.6px;background:#00918e;border-radius:13px"></div>
<div style="left:820.6px;top:1187.3px;width:20.2px;height:20.2px;background:#fff;border-radius:50%"></div>
<svg style="left:874.68px;top:1187.97px" width="20.85" height="20.85" viewBox="0 0 24 24"><path fill="#bdbdbd" d="M12 12c2.21 0 4-1.79 4-4s-1.79-4-4-4-4 1.79-4 4 1.79 4 4 4zm0 2c-2.67 0-8 1.34-8 4v2h16v-2c0-2.66-5.33-4-8-4z"/></svg>
<svg style="left:925px;top:1192px" width="25" height="11" fill="#686868"><circle cx="5.05" cy="5.60" r="2.35"/><circle cx="12.60" cy="5.60" r="2.35"/><circle cx="20.15" cy="5.60" r="2.35"/></svg>
<div class="card" style="left:543.7px;top:1236.8px;width:421.79999999999995px;height:102.2px;background:#f5f5f5"></div>
<svg style="left:550px;top:1276px" width="18" height="25" fill="#d3d3d3"><circle cx="4.90" cy="4.60" r="2.30"/><circle cx="12.40" cy="4.60" r="2.30"/><circle cx="4.90" cy="12.10" r="2.30"/><circle cx="12.40" cy="12.10" r="2.30"/><circle cx="4.90" cy="19.60" r="2.30"/><circle cx="12.40" cy="19.60" r="2.30"/></svg>
<div style="left:578.7px;top:1248.0px;width:40px;height:40px;background:#ebebeb;border-radius:50%"></div>
<svg style="left:586.92px;top:1255.12px" width="24.25" height="24.25" viewBox="0 0 24 24"><path fill="#cecece" d="M17.63 5.84C17.27 5.33 16.67 5 16 5L5 5.01C3.9 5.01 3 5.9 3 7v10c0 1.1.9 1.99 2 1.99L16 19c.67 0 1.27-.33 1.63-.84L22 12l-4.37-6.16z"/></svg>
<span class="t g" style="left:629px;top:1257px;font-size:18.75px;color:#dddddd;transform:translate(0.42px,0.00px) scaleX(0.9873)">Entity indicators</span>
<svg style="left:790.60px;top:1299.90px" width="21.20" height="21.20" viewBox="0 0 24 24"><path fill="#00918e" d="M19.14 12.94c.04-.3.06-.61.06-.94 0-.32-.02-.64-.07-.94l2.03-1.58c.18-.14.23-.41.12-.61l-1.92-3.32c-.12-.22-.37-.29-.59-.22l-2.39.96c-.5-.38-1.03-.7-1.62-.94l-.36-2.54c-.04-.24-.24-.41-.48-.41h-3.84c-.24 0-.43.17-.47.41l-.36 2.54c-.59.24-1.13.57-1.62.94l-2.39-.96c-.22-.08-.47 0-.59.22L2.74 8.87c-.12.21-.08.47.12.61l2.03 1.58c-.05.3-.09.63-.09.94s.02.64.07.94l-2.03 1.58c-.18.14-.23.41-.12.61l1.92 3.32c.12.22.37.29.59.22l2.39-.96c.5.38 1.03.7 1.62.94l.36 2.54c.05.24.24.41.48.41h3.84c.24 0 .44-.17.47-.41l.36-2.54c.59-.24 1.13-.56 1.62-.94l2.39.96c.22.08.47 0 .59-.22l1.92-3.32c.12-.22.07-.47-.12-.61l-2.01-1.58zM12 15.6c-1.98 0-3.6-1.62-3.6-3.6s1.62-3.6 3.6-3.6 3.6 1.62 3.6 3.6-1.62 3.6-3.6 3.6z"/></svg>
<div style="left:818.0px;top:1297.1px;width:50.3px;height:25.6px;background:#00918e;border-radius:13px"></div>
<div style="left:820.6px;top:1299.8px;width:20.2px;height:20.2px;background:#fff;border-radius:50%"></div>
<svg style="left:874.68px;top:1300.47px" width="20.85" height="20.85" viewBox="0 0 24 24"><path fill="#bdbdbd" d="M12 12c2.21 0 4-1.79 4-4s-1.79-4-4-4-4 1.79-4 4 1.79 4 4 4zm0 2c-2.67 0-8 1.34-8 4v2h16v-2c0-2.66-5.33-4-8-4z"/></svg>
<svg style="left:925px;top:1305px" width="25" height="10" fill="#686868"><circle cx="5.05" cy="5.10" r="2.35"/><circle cx="12.60" cy="5.10" r="2.35"/><circle cx="20.15" cy="5.10" r="2.35"/></svg>
<div class="card" style="left:543.7px;top:1349.3px;width:421.79999999999995px;height:102.2px;background:#f5f5f5"></div>
<svg style="left:550px;top:1388px" width="18" height="25" fill="#d3d3d3"><circle cx="4.90" cy="5.10" r="2.30"/><circle cx="12.40" cy="5.10" r="2.30"/><circle cx="4.90" cy="12.60" r="2.30"/><circle cx="12.40" cy="12.60" r="2.30"/><circle cx="4.90" cy="20.10" r="2.30"/><circle cx="12.40" cy="20.10" r="2.30"/></svg>
<div style="left:578.7px;top:1360.5px;width:40px;height:40px;background:#ebebeb;border-radius:50%"></div>
<svg style="left:585.7px;top:1370.5px" width="26" height="20" viewBox="0 0 26 20"><path d="M7 4.8L2 9.5l5 4.6M19.4 4.8l5 4.7-5 4.6M14 1.1L11.4 18.4" stroke="#d0d0d0" stroke-width="1.7" fill="none"/></svg>
<span class="t g" style="left:630px;top:1369px;font-size:18.75px;color:#dddddd;transform:translate(0.00px,0.50px) scaleX(0.9465)">Actions</span>
<div style="left:698px;top:1365.5px;width:30px;height:30px;background:#d2d2d2;border-radius:50%"></div>
<svg style="left:703.02px;top:1370.64px" width="19.95" height="19.95" viewBox="0 0 24 24"><path fill="#5c5c5c" d="M18 8h-1V6c0-2.76-2.24-5-5-5S7 3.24 7 6v2H6c-1.1 0-2 .9-2 2v10c0 1.1.9 2 2 2h12c1.1 0 2-.9 2-2V10c0-1.1-.9-2-2-2zm-6 9c-1.1 0-2-.9-2-2s.9-2 2-2 2 .9 2 2-.9 2-2 2zm3.1-9H8.9V6c0-1.71 1.39-3.1 3.1-3.1 1.71 0 3.1 1.39 3.1 3.1v2z"/></svg>
<div class="card" style="left:543.7px;top:1461.8px;width:421.79999999999995px;height:102.2px;background:#f5f5f5"></div>
<svg style="left:550px;top:1501px" width="18" height="25" fill="#d3d3d3"><circle cx="4.90" cy="4.60" r="2.30"/><circle cx="12.40" cy="4.60" r="2.30"/><circle cx="4.90" cy="12.10" r="2.30"/><circle cx="12.40" cy="12.10" r="2.30"/><circle cx="4.90" cy="19.60" r="2.30"/><circle cx="12.40" cy="19.60" r="2.30"/></svg>
<div style="left:578.7px;top:1473.0px;width:40px;height:40px;background:#ebebeb;border-radius:50%"></div>
<svg style="left:586.87px;top:1480.37px" width="24.27" height="24.27" viewBox="0 0 24 24"><path fill="#cecece" d="M14,17H12V15H10V13H12V15H14M14,9H12V11H14V13H12V11H10V9H12V7H10V5H12V7H14M19,3H5C3.89,3 3,3.89 3,5V19A2,2 0 0,0 5,21H19A2,2 0 0,0 21,19V5C21,3.89 20.1,3 19,3Z"/></svg>
<span class="t g" style="left:629px;top:1482px;font-size:18.75px;color:#dddddd;transform:translate(0.35px,0.00px) scaleX(0.9522)">Subfiles Viewer</span>
<svg style="left:790.60px;top:1524.90px" width="21.20" height="21.20" viewBox="0 0 24 24"><path fill="#00918e" d="M19.14 12.94c.04-.3.06-.61.06-.94 0-.32-.02-.64-.07-.94l2.03-1.58c.18-.14.23-.41.12-.61l-1.92-3.32c-.12-.22-.37-.29-.59-.22l-2.39.96c-.5-.38-1.03-.7-1.62-.94l-.36-2.54c-.04-.24-.24-.41-.48-.41h-3.84c-.24 0-.43.17-.47.41l-.36 2.54c-.59.24-1.13.57-1.62.94l-2.39-.96c-.22-.08-.47 0-.59.22L2.74 8.87c-.12.21-.08.47.12.61l2.03 1.58c-.05.3-.09.63-.09.94s.02.64.07.94l-2.03 1.58c-.18.14-.23.41-.12.61l1.92 3.32c.12.22.37.29.59.22l2.39-.96c.5.38 1.03.7 1.62.94l.36 2.54c.05.24.24.41.48.41h3.84c.24 0 .44-.17.47-.41l.36-2.54c.59-.24 1.13-.56 1.62-.94l2.39.96c.22.08.47 0 .59-.22l1.92-3.32c.12-.22.07-.47-.12-.61l-2.01-1.58zM12 15.6c-1.98 0-3.6-1.62-3.6-3.6s1.62-3.6 3.6-3.6 3.6 1.62 3.6 3.6-1.62 3.6-3.6 3.6z"/></svg>
<div style="left:818.0px;top:1522.1px;width:50.3px;height:25.6px;background:#00918e;border-radius:13px"></div>
<div style="left:820.6px;top:1524.8px;width:20.2px;height:20.2px;background:#fff;border-radius:50%"></div>
<svg style="left:874.68px;top:1525.47px" width="20.85" height="20.85" viewBox="0 0 24 24"><path fill="#bdbdbd" d="M12 12c2.21 0 4-1.79 4-4s-1.79-4-4-4-4 1.79-4 4 1.79 4 4 4zm0 2c-2.67 0-8 1.34-8 4v2h16v-2c0-2.66-5.33-4-8-4z"/></svg>
<svg style="left:925px;top:1530px" width="25" height="10" fill="#686868"><circle cx="5.05" cy="5.10" r="2.35"/><circle cx="12.60" cy="5.10" r="2.35"/><circle cx="20.15" cy="5.10" r="2.35"/></svg>
<div class="card" style="left:543.7px;top:1574.3px;width:421.79999999999995px;height:102.2px;background:#f5f5f5"></div>
<svg style="left:550px;top:1613px" width="18" height="25" fill="#d3d3d3"><circle cx="4.90" cy="5.10" r="2.30"/><circle cx="12.40" cy="5.10" r="2.30"/><circle cx="4.90" cy="12.60" r="2.30"/><circle cx="12.40" cy="12.60" r="2.30"/><circle cx="4.90" cy="20.10" r="2.30"/><circle cx="12.40" cy="20.10" r="2.30"/></svg>
<div style="left:578.7px;top:1585.5px;width:40px;height:40px;background:#ebebeb;border-radius:50%"></div>
<svg style="left:587.30px;top:1593.50px" width="24.00" height="24.00" viewBox="0 0 24 24"><path fill="#cecece" d="M13 3c-4.97 0-9 4.03-9 9H1l3.89 3.89.07.14L9 12H6c0-3.87 3.13-7 7-7s7 3.13 7 7-3.13 7-7 7c-1.93 0-3.68-.79-4.94-2.06l-1.42 1.42C8.27 19.99 10.51 21 13 21c4.97 0 9-4.03 9-9s-4.03-9-9-9zm-1 5v5l4.28 2.54.72-1.21-3.5-2.08V8H12z"/></svg>
<span class="t g" style="left:629px;top:1594px;font-size:18.75px;color:#dddddd;transform:translate(0.43px,0.50px) scaleX(0.9812)">Entity history viewer</span>
<svg style="left:790.60px;top:1637.40px" width="21.20" height="21.20" viewBox="0 0 24 24"><path fill="#00918e" d="M19.14 12.94c.04-.3.06-.61.06-.94 0-.32-.02-.64-.07-.94l2.03-1.58c.18-.14.23-.41.12-.61l-1.92-3.32c-.12-.22-.37-.29-.59-.22l-2.39.96c-.5-.38-1.03-.7-1.62-.94l-.36-2.54c-.04-.24-.24-.41-.48-.41h-3.84c-.24 0-.43.17-.47.41l-.36 2.54c-.59.24-1.13.57-1.62.94l-2.39-.96c-.22-.08-.47 0-.59.22L2.74 8.87c-.12.21-.08.47.12.61l2.03 1.58c-.05.3-.09.63-.09.94s.02.64.07.94l-2.03 1.58c-.18.14-.23.41-.12.61l1.92 3.32c.12.22.37.29.59.22l2.39-.96c.5.38 1.03.7 1.62.94l.36 2.54c.05.24.24.41.48.41h3.84c.24 0 .44-.17.47-.41l.36-2.54c.59-.24 1.13-.56 1.62-.94l2.39.96c.22.08.47 0 .59-.22l1.92-3.32c.12-.22.07-.47-.12-.61l-2.01-1.58zM12 15.6c-1.98 0-3.6-1.62-3.6-3.6s1.62-3.6 3.6-3.6 3.6 1.62 3.6 3.6-1.62 3.6-3.6 3.6z"/></svg>
<div style="left:818.0px;top:1634.6px;width:50.3px;height:25.6px;background:#00918e;border-radius:13px"></div>
<div style="left:820.6px;top:1637.3px;width:20.2px;height:20.2px;background:#fff;border-radius:50%"></div>
<svg style="left:874.68px;top:1637.97px" width="20.85" height="20.85" viewBox="0 0 24 24"><path fill="#bdbdbd" d="M12 12c2.21 0 4-1.79 4-4s-1.79-4-4-4-4 1.79-4 4 1.79 4 4 4zm0 2c-2.67 0-8 1.34-8 4v2h16v-2c0-2.66-5.33-4-8-4z"/></svg>
<svg style="left:925px;top:1642px" width="25" height="11" fill="#686868"><circle cx="5.05" cy="5.60" r="2.35"/><circle cx="12.60" cy="5.60" r="2.35"/><circle cx="20.15" cy="5.60" r="2.35"/></svg>
<div class="card" style="left:543.7px;top:1686.8px;width:421.79999999999995px;height:102.2px;background:#f5f5f5"></div>
<svg style="left:550px;top:1726px" width="18" height="25" fill="#d3d3d3"><circle cx="4.90" cy="4.60" r="2.30"/><circle cx="12.40" cy="4.60" r="2.30"/><circle cx="4.90" cy="12.10" r="2.30"/><circle cx="12.40" cy="12.10" r="2.30"/><circle cx="4.90" cy="19.60" r="2.30"/><circle cx="12.40" cy="19.60" r="2.30"/></svg>
<div style="left:578.7px;top:1698.0px;width:40px;height:40px;background:#ebebeb;border-radius:50%"></div>
<svg style="left:586.7px;top:1705.0px" width="26" height="24" viewBox="0 0 26 24"><path d="M12.3 4.6H3.85V20.5H19.9V11.6" stroke="#cecece" stroke-width="2" fill="none" stroke-linejoin="round"/><path d="M8.7 15L9.4 11.7L19.9 1.9L22.4 4.5L12 14.3Z M20.7 1.2L21.8 0.2L24.2 2.8L23.2 3.8Z" fill="#cecece"/></svg>
<span class="t g" style="left:629px;top:1707px;font-size:18.75px;color:#dddddd;transform:translate(0.44px,0.00px) scaleX(0.9723)">Renditions</span>
<svg style="left:790.60px;top:1749.90px" width="21.20" height="21.20" viewBox="0 0 24 24"><path fill="#00918e" d="M19.14 12.94c.04-.3.06-.61.06-.94 0-.32-.02-.64-.07-.94l2.03-1.58c.18-.14.23-.41.12-.61l-1.92-3.32c-.12-.22-.37-.29-.59-.22l-2.39.96c-.5-.38-1.03-.7-1.62-.94l-.36-2.54c-.04-.24-.24-.41-.48-.41h-3.84c-.24 0-.43.17-.47.41l-.36 2.54c-.59.24-1.13.57-1.62.94l-2.39-.96c-.22-.08-.47 0-.59.22L2.74 8.87c-.12.21-.08.47.12.61l2.03 1.58c-.05.3-.09.63-.09.94s.02.64.07.94l-2.03 1.58c-.18.14-.23.41-.12.61l1.92 3.32c.12.22.37.29.59.22l2.39-.96c.5.38 1.03.7 1.62.94l.36 2.54c.05.24.24.41.48.41h3.84c.24 0 .44-.17.47-.41l.36-2.54c.59-.24 1.13-.56 1.62-.94l2.39.96c.22.08.47 0 .59-.22l1.92-3.32c.12-.22.07-.47-.12-.61l-2.01-1.58zM12 15.6c-1.98 0-3.6-1.62-3.6-3.6s1.62-3.6 3.6-3.6 3.6 1.62 3.6 3.6-1.62 3.6-3.6 3.6z"/></svg>
<div style="left:818.0px;top:1747.1px;width:50.3px;height:25.6px;background:#00918e;border-radius:13px"></div>
<div style="left:820.6px;top:1749.8px;width:20.2px;height:20.2px;background:#fff;border-radius:50%"></div>
<svg style="left:874.68px;top:1750.47px" width="20.85" height="20.85" viewBox="0 0 24 24"><path fill="#bdbdbd" d="M12 12c2.21 0 4-1.79 4-4s-1.79-4-4-4-4 1.79-4 4 1.79 4 4 4zm0 2c-2.67 0-8 1.34-8 4v2h16v-2c0-2.66-5.33-4-8-4z"/></svg>
<svg style="left:925px;top:1755px" width="25" height="10" fill="#686868"><circle cx="5.05" cy="5.10" r="2.35"/><circle cx="12.60" cy="5.10" r="2.35"/><circle cx="20.15" cy="5.10" r="2.35"/></svg>
<div class="add" style="left:543.7px;top:1799.3px;width:421.8px;height:54.4px"></div>
<svg style="left:744.8px;top:1818.5px" width="19.6" height="19.6" viewBox="0 0 19.6 19.6"><path d="M1 9.8H18.6M9.8 1V18.6" stroke="#616161" stroke-width="1.7" fill="none"/></svg>
<div style="left:541px;top:1119px;width:425.4px;height:110.8px;border:3px solid #ff7a1f"></div>
<div class="card" style="left:985px;top:1011.8px;width:422.29999999999995px;height:102.2px;background:#f5f5f5"></div>
<svg style="left:991px;top:1051px" width="18" height="25" fill="#d3d3d3"><circle cx="5.20" cy="4.60" r="2.30"/><circle cx="12.70" cy="4.60" r="2.30"/><circle cx="5.20" cy="12.10" r="2.30"/><circle cx="12.70" cy="12.10" r="2.30"/><circle cx="5.20" cy="19.60" r="2.30"/><circle cx="12.70" cy="19.60" r="2.30"/></svg>
<div style="left:1020px;top:1023.0px;width:40px;height:40px;background:#ebebeb;border-radius:50%"></div>
<svg style="left:1028.21px;top:1030.46px" width="24.48" height="24.48" viewBox="0 0 24 24"><path fill="#cecece" d="M12 2C6.48 2 2 6.48 2 12s4.48 10 10 10 10-4.48 10-10S17.52 2 12 2zm1 15h-2v-6h2v6zm0-8h-2V7h2v2z"/></svg>
<span class="t g" style="left:1070px;top:1032px;font-size:18.75px;color:#dddddd;transform:translate(0.76px,0.00px) scaleX(0.9611)">Details</span>
<svg style="left:1232.40px;top:1074.90px" width="21.20" height="21.20" viewBox="0 0 24 24"><path fill="#00918e" d="M19.14 12.94c.04-.3.06-.61.06-.94 0-.32-.02-.64-.07-.94l2.03-1.58c.18-.14.23-.41.12-.61l-1.92-3.32c-.12-.22-.37-.29-.59-.22l-2.39.96c-.5-.38-1.03-.7-1.62-.94l-.36-2.54c-.04-.24-.24-.41-.48-.41h-3.84c-.24 0-.43.17-.47.41l-.36 2.54c-.59.24-1.13.57-1.62.94l-2.39-.96c-.22-.08-.47 0-.59.22L2.74 8.87c-.12.21-.08.47.12.61l2.03 1.58c-.05.3-.09.63-.09.94s.02.64.07.94l-2.03 1.58c-.18.14-.23.41-.12.61l1.92 3.32c.12.22.37.29.59.22l2.39-.96c.5.38 1.03.7 1.62.94l.36 2.54c.05.24.24.41.48.41h3.84c.24 0 .44-.17.47-.41l.36-2.54c.59-.24 1.13-.56 1.62-.94l2.39.96c.22.08.47 0 .59-.22l1.92-3.32c.12-.22.07-.47-.12-.61l-2.01-1.58zM12 15.6c-1.98 0-3.6-1.62-3.6-3.6s1.62-3.6 3.6-3.6 3.6 1.62 3.6 3.6-1.62 3.6-3.6 3.6z"/></svg>
<div style="left:1259.8px;top:1072.1px;width:50.3px;height:25.6px;background:#00918e;border-radius:13px"></div>
<div style="left:1262.4px;top:1074.8px;width:20.2px;height:20.2px;background:#fff;border-radius:50%"></div>
<svg style="left:1316.47px;top:1075.47px" width="20.85" height="20.85" viewBox="0 0 24 24"><path fill="#bdbdbd" d="M12 12c2.21 0 4-1.79 4-4s-1.79-4-4-4-4 1.79-4 4 1.79 4 4 4zm0 2c-2.67 0-8 1.34-8 4v2h16v-2c0-2.66-5.33-4-8-4z"/></svg>
<svg style="left:1367px;top:1080px" width="25" height="10" fill="#686868"><circle cx="4.85" cy="5.10" r="2.35"/><circle cx="12.40" cy="5.10" r="2.35"/><circle cx="19.95" cy="5.10" r="2.35"/></svg>
<div class="card" style="left:985px;top:1124.3px;width:422.29999999999995px;height:102.2px;background:#f5f5f5"></div>
<svg style="left:991px;top:1163px" width="18" height="25" fill="#d3d3d3"><circle cx="5.20" cy="5.10" r="2.30"/><circle cx="12.70" cy="5.10" r="2.30"/><circle cx="5.20" cy="12.60" r="2.30"/><circle cx="12.70" cy="12.60" r="2.30"/><circle cx="5.20" cy="20.10" r="2.30"/><circle cx="12.70" cy="20.10" r="2.30"/></svg>
<div style="left:1020px;top:1135.5px;width:40px;height:40px;background:#ebebeb;border-radius:50%"></div>
<svg style="left:1028.21px;top:1142.96px" width="24.48" height="24.48" viewBox="0 0 24 24"><path fill="#cecece" d="M12 2C6.48 2 2 6.48 2 12s4.48 10 10 10 10-4.48 10-10S17.52 2 12 2zm1 15h-2v-6h2v6zm0-8h-2V7h2v2z"/></svg>
<span class="t g" style="left:1070px;top:1144px;font-size:18.75px;color:#dddddd;transform:translate(0.53px,0.50px) scaleX(0.9532)">Image analysis</span>
<svg style="left:1232.40px;top:1187.40px" width="21.20" height="21.20" viewBox="0 0 24 24"><path fill="#00918e" d="M19.14 12.94c.04-.3.06-.61.06-.94 0-.32-.02-.64-.07-.94l2.03-1.58c.18-.14.23-.41.12-.61l-1.92-3.32c-.12-.22-.37-.29-.59-.22l-2.39.96c-.5-.38-1.03-.7-1.62-.94l-.36-2.54c-.04-.24-.24-.41-.48-.41h-3.84c-.24 0-.43.17-.47.41l-.36 2.54c-.59.24-1.13.57-1.62.94l-2.39-.96c-.22-.08-.47 0-.59.22L2.74 8.87c-.12.21-.08.47.12.61l2.03 1.58c-.05.3-.09.63-.09.94s.02.64.07.94l-2.03 1.58c-.18.14-.23.41-.12.61l1.92 3.32c.12.22.37.29.59.22l2.39-.96c.5.38 1.03.7 1.62.94l.36 2.54c.05.24.24.41.48.41h3.84c.24 0 .44-.17.47-.41l.36-2.54c.59-.24 1.13-.56 1.62-.94l2.39.96c.22.08.47 0 .59-.22l1.92-3.32c.12-.22.07-.47-.12-.61l-2.01-1.58zM12 15.6c-1.98 0-3.6-1.62-3.6-3.6s1.62-3.6 3.6-3.6 3.6 1.62 3.6 3.6-1.62 3.6-3.6 3.6z"/></svg>
<div style="left:1259.8px;top:1184.6px;width:50.3px;height:25.6px;background:#00918e;border-radius:13px"></div>
<div style="left:1262.4px;top:1187.3px;width:20.2px;height:20.2px;background:#fff;border-radius:50%"></div>
<svg style="left:1316.47px;top:1187.97px" width="20.85" height="20.85" viewBox="0 0 24 24"><path fill="#bdbdbd" d="M12 12c2.21 0 4-1.79 4-4s-1.79-4-4-4-4 1.79-4 4 1.79 4 4 4zm0 2c-2.67 0-8 1.34-8 4v2h16v-2c0-2.66-5.33-4-8-4z"/></svg>
<svg style="left:1367px;top:1192px" width="25" height="11" fill="#686868"><circle cx="4.85" cy="5.60" r="2.35"/><circle cx="12.40" cy="5.60" r="2.35"/><circle cx="19.95" cy="5.60" r="2.35"/></svg>
<div class="card" style="left:985px;top:1236.8px;width:422.29999999999995px;height:102.2px;background:#fff"></div>
<svg style="left:991px;top:1276px" width="18" height="25" fill="#dcdcdc"><circle cx="5.20" cy="4.60" r="2.30"/><circle cx="12.70" cy="4.60" r="2.30"/><circle cx="5.20" cy="12.10" r="2.30"/><circle cx="12.70" cy="12.10" r="2.30"/><circle cx="5.20" cy="19.60" r="2.30"/><circle cx="12.70" cy="19.60" r="2.30"/></svg>
<div style="left:1020px;top:1248.0px;width:40px;height:40px;background:#e0f5f8;border-radius:50%"></div>
<svg style="left:1027.67px;top:1255.27px" width="24.65" height="24.65" viewBox="0 0 24 24"><path fill="#0097a7" d="M21 3H3c-1.1 0-2 .9-2 2v14c0 1.1.9 2 2 2h18c1.1 0 2-.9 2-2V5c0-1.1-.9-2-2-2zm0 16H3V5h10v4h8v10z"/></svg>
<span class="t g" style="left:1070px;top:1257px;font-size:18.75px;color:#333;transform:translate(0.78px,0.00px) scaleX(0.9476)">Linked assets</span>
<div style="left:1190.2px;top:1253.0px;width:30px;height:30px;background:#dedede;border-radius:50%"></div>
<svg style="left:1195.16px;top:1257.74px" width="20.08" height="20.08" viewBox="0 0 24 24"><path fill="#6e6e6e" d="M12 7c2.76 0 5 2.24 5 5 0 .65-.13 1.26-.36 1.83l2.92 2.92c1.51-1.26 2.7-2.89 3.43-4.75-1.73-4.39-6-7.5-11-7.5-1.4 0-2.74.25-3.98.7l2.16 2.16C10.74 7.13 11.35 7 12 7zM2 4.27l2.28 2.28.46.46C3.08 8.3 1.78 10.02 1 12c1.73 4.39 6 7.5 11 7.5 1.55 0 3.03-.3 4.38-.84l.42.42L19.73 22 21 20.73 3.27 3 2 4.27zM7.53 9.8l1.55 1.55c-.05.21-.08.43-.08.65 0 1.66 1.34 3 3 3 .22 0 .44-.03.65-.08l1.55 1.55c-.67.33-1.41.53-2.2.53-2.76 0-5-2.24-5-5 0-.79.2-1.53.53-2.2zm4.31-.78l3.15 3.15.02-.16c0-1.66-1.34-3-3-3l-.17.01z"/></svg>
<svg style="left:1232.40px;top:1299.90px" width="21.20" height="21.20" viewBox="0 0 24 24"><path fill="#00918e" d="M19.14 12.94c.04-.3.06-.61.06-.94 0-.32-.02-.64-.07-.94l2.03-1.58c.18-.14.23-.41.12-.61l-1.92-3.32c-.12-.22-.37-.29-.59-.22l-2.39.96c-.5-.38-1.03-.7-1.62-.94l-.36-2.54c-.04-.24-.24-.41-.48-.41h-3.84c-.24 0-.43.17-.47.41l-.36 2.54c-.59.24-1.13.57-1.62.94l-2.39-.96c-.22-.08-.47 0-.59.22L2.74 8.87c-.12.21-.08.47.12.61l2.03 1.58c-.05.3-.09.63-.09.94s.02.64.07.94l-2.03 1.58c-.18.14-.23.41-.12.61l1.92 3.32c.12.22.37.29.59.22l2.39-.96c.5.38 1.03.7 1.62.94l.36 2.54c.05.24.24.41.48.41h3.84c.24 0 .44-.17.47-.41l.36-2.54c.59-.24 1.13-.56 1.62-.94l2.39.96c.22.08.47 0 .59-.22l1.92-3.32c.12-.22.07-.47-.12-.61l-2.01-1.58zM12 15.6c-1.98 0-3.6-1.62-3.6-3.6s1.62-3.6 3.6-3.6 3.6 1.62 3.6 3.6-1.62 3.6-3.6 3.6z"/></svg>
<div style="left:1259.8px;top:1297.1px;width:50.3px;height:25.6px;background:#00918e;border-radius:13px"></div>
<div style="left:1262.4px;top:1299.8px;width:20.2px;height:20.2px;background:#fff;border-radius:50%"></div>
<svg style="left:1316.47px;top:1300.47px" width="20.85" height="20.85" viewBox="0 0 24 24"><path fill="#bdbdbd" d="M12 12c2.21 0 4-1.79 4-4s-1.79-4-4-4-4 1.79-4 4 1.79 4 4 4zm0 2c-2.67 0-8 1.34-8 4v2h16v-2c0-2.66-5.33-4-8-4z"/></svg>
<svg style="left:1367px;top:1305px" width="25" height="10" fill="#686868"><circle cx="4.85" cy="5.10" r="2.35"/><circle cx="12.40" cy="5.10" r="2.35"/><circle cx="19.95" cy="5.10" r="2.35"/></svg>
<div class="card" style="left:985px;top:1349.3px;width:422.29999999999995px;height:102.2px;background:#f5f5f5"></div>
<svg style="left:991px;top:1388px" width="18" height="25" fill="#d3d3d3"><circle cx="5.20" cy="5.10" r="2.30"/><circle cx="12.70" cy="5.10" r="2.30"/><circle cx="5.20" cy="12.60" r="2.30"/><circle cx="12.70" cy="12.60" r="2.30"/><circle cx="5.20" cy="20.10" r="2.30"/><circle cx="12.70" cy="20.10" r="2.30"/></svg>
<div style="left:1020px;top:1360.5px;width:40px;height:40px;background:#ebebeb;border-radius:50%"></div>
<svg style="left:1028.21px;top:1367.96px" width="24.48" height="24.48" viewBox="0 0 24 24"><path fill="#cecece" d="M12 2C6.48 2 2 6.48 2 12s4.48 10 10 10 10-4.48 10-10S17.52 2 12 2zm1 15h-2v-6h2v6zm0-8h-2V7h2v2z"/></svg>
<span class="t g" style="left:1070px;top:1369px;font-size:18.75px;color:#dddddd;transform:translate(0.74px,0.50px) scaleX(0.9765)">Entity details</span>
<svg style="left:1232.40px;top:1412.40px" width="21.20" height="21.20" viewBox="0 0 24 24"><path fill="#00918e" d="M19.14 12.94c.04-.3.06-.61.06-.94 0-.32-.02-.64-.07-.94l2.03-1.58c.18-.14.23-.41.12-.61l-1.92-3.32c-.12-.22-.37-.29-.59-.22l-2.39.96c-.5-.38-1.03-.7-1.62-.94l-.36-2.54c-.04-.24-.24-.41-.48-.41h-3.84c-.24 0-.43.17-.47.41l-.36 2.54c-.59.24-1.13.57-1.62.94l-2.39-.96c-.22-.08-.47 0-.59.22L2.74 8.87c-.12.21-.08.47.12.61l2.03 1.58c-.05.3-.09.63-.09.94s.02.64.07.94l-2.03 1.58c-.18.14-.23.41-.12.61l1.92 3.32c.12.22.37.29.59.22l2.39-.96c.5.38 1.03.7 1.62.94l.36 2.54c.05.24.24.41.48.41h3.84c.24 0 .44-.17.47-.41l.36-2.54c.59-.24 1.13-.56 1.62-.94l2.39.96c.22.08.47 0 .59-.22l1.92-3.32c.12-.22.07-.47-.12-.61l-2.01-1.58zM12 15.6c-1.98 0-3.6-1.62-3.6-3.6s1.62-3.6 3.6-3.6 3.6 1.62 3.6 3.6-1.62 3.6-3.6 3.6z"/></svg>
<div style="left:1259.8px;top:1409.6px;width:50.3px;height:25.6px;background:#00918e;border-radius:13px"></div>
<div style="left:1262.4px;top:1412.3px;width:20.2px;height:20.2px;background:#fff;border-radius:50%"></div>
<svg style="left:1316.47px;top:1412.97px" width="20.85" height="20.85" viewBox="0 0 24 24"><path fill="#bdbdbd" d="M12 12c2.21 0 4-1.79 4-4s-1.79-4-4-4-4 1.79-4 4 1.79 4 4 4zm0 2c-2.67 0-8 1.34-8 4v2h16v-2c0-2.66-5.33-4-8-4z"/></svg>
<svg style="left:1367px;top:1417px" width="25" height="11" fill="#686868"><circle cx="4.85" cy="5.60" r="2.35"/><circle cx="12.40" cy="5.60" r="2.35"/><circle cx="19.95" cy="5.60" r="2.35"/></svg>
<div class="add" style="left:985px;top:1461.9px;width:422.3px;height:54.4px"></div>
<svg style="left:1186.35px;top:1481.1px" width="19.6" height="19.6" viewBox="0 0 19.6 19.6"><path d="M1 9.8H18.6M9.8 1V18.6" stroke="#616161" stroke-width="1.7" fill="none"/></svg>
<div class="card" style="left:1427px;top:1011.8px;width:422.20000000000005px;height:102.2px;background:#fff"></div>
<svg style="left:1433px;top:1051px" width="18" height="25" fill="#dcdcdc"><circle cx="5.20" cy="4.60" r="2.30"/><circle cx="12.70" cy="4.60" r="2.30"/><circle cx="5.20" cy="12.10" r="2.30"/><circle cx="12.70" cy="12.10" r="2.30"/><circle cx="5.20" cy="19.60" r="2.30"/><circle cx="12.70" cy="19.60" r="2.30"/></svg>
<div style="left:1462px;top:1023.0px;width:40px;height:40px;background:#e0f5f8;border-radius:50%"></div>
<svg style="left:1469.67px;top:1030.27px" width="24.65" height="24.65" viewBox="0 0 24 24"><path fill="#0097a7" d="M21 3H3c-1.1 0-2 .9-2 2v14c0 1.1.9 2 2 2h18c1.1 0 2-.9 2-2V5c0-1.1-.9-2-2-2zm0 16H3V5h10v4h8v10z"/></svg>
<span class="t g" style="left:1512px;top:1032px;font-size:18.75px;color:#333;transform:translate(0.11px,0.00px) scaleX(0.9740)">Tabs</span>
<svg style="left:1674.30px;top:1074.90px" width="21.20" height="21.20" viewBox="0 0 24 24"><path fill="#00918e" d="M19.14 12.94c.04-.3.06-.61.06-.94 0-.32-.02-.64-.07-.94l2.03-1.58c.18-.14.23-.41.12-.61l-1.92-3.32c-.12-.22-.37-.29-.59-.22l-2.39.96c-.5-.38-1.03-.7-1.62-.94l-.36-2.54c-.04-.24-.24-.41-.48-.41h-3.84c-.24 0-.43.17-.47.41l-.36 2.54c-.59.24-1.13.57-1.62.94l-2.39-.96c-.22-.08-.47 0-.59.22L2.74 8.87c-.12.21-.08.47.12.61l2.03 1.58c-.05.3-.09.63-.09.94s.02.64.07.94l-2.03 1.58c-.18.14-.23.41-.12.61l1.92 3.32c.12.22.37.29.59.22l2.39-.96c.5.38 1.03.7 1.62.94l.36 2.54c.05.24.24.41.48.41h3.84c.24 0 .44-.17.47-.41l.36-2.54c.59-.24 1.13-.56 1.62-.94l2.39.96c.22.08.47 0 .59-.22l1.92-3.32c.12-.22.07-.47-.12-.61l-2.01-1.58zM12 15.6c-1.98 0-3.6-1.62-3.6-3.6s1.62-3.6 3.6-3.6 3.6 1.62 3.6 3.6-1.62 3.6-3.6 3.6z"/></svg>
<div style="left:1701.7px;top:1072.1px;width:50.3px;height:25.6px;background:#00918e;border-radius:13px"></div>
<div style="left:1704.3px;top:1074.8px;width:20.2px;height:20.2px;background:#fff;border-radius:50%"></div>
<svg style="left:1758.38px;top:1075.47px" width="20.85" height="20.85" viewBox="0 0 24 24"><path fill="#bdbdbd" d="M12 12c2.21 0 4-1.79 4-4s-1.79-4-4-4-4 1.79-4 4 1.79 4 4 4zm0 2c-2.67 0-8 1.34-8 4v2h16v-2c0-2.66-5.33-4-8-4z"/></svg>
<svg style="left:1809px;top:1080px" width="25" height="10" fill="#686868"><circle cx="4.75" cy="5.10" r="2.35"/><circle cx="12.30" cy="5.10" r="2.35"/><circle cx="19.85" cy="5.10" r="2.35"/></svg>
<div class="add" style="left:1427px;top:1124.5px;width:422.2px;height:54.4px"></div>
<svg style="left:1628.3px;top:1143.7px" width="19.6" height="19.6" viewBox="0 0 19.6 19.6"><path d="M1 9.8H18.6M9.8 1V18.6" stroke="#616161" stroke-width="1.7" fill="none"/></svg>
</div>
</body></html>
